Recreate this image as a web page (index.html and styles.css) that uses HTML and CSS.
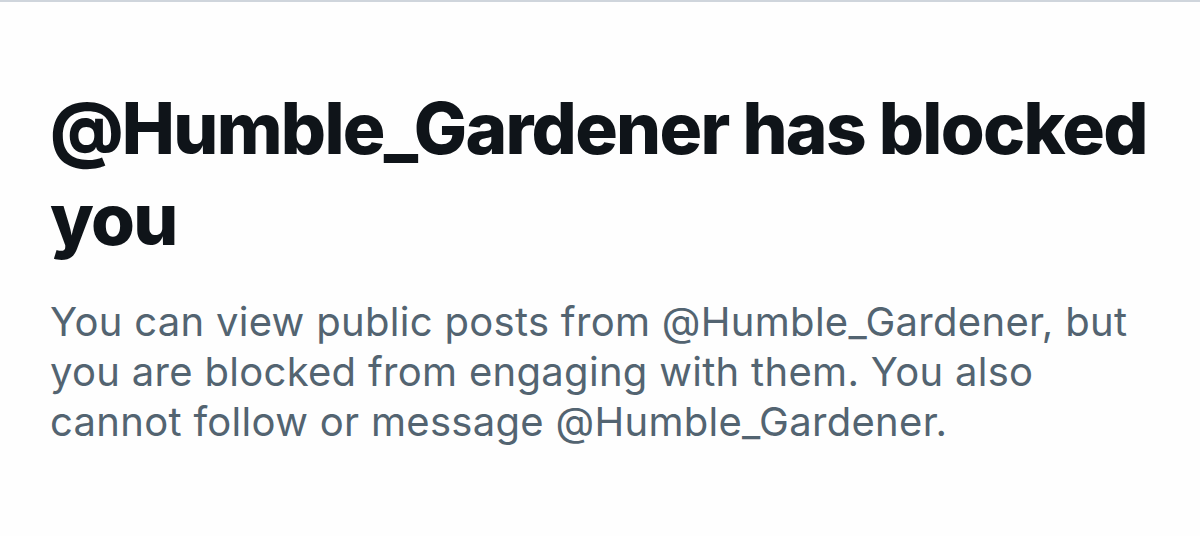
FILE: index.html
```html
<!DOCTYPE html>
<html>
<head>
<meta charset="utf-8">
<link rel="stylesheet" href="styles.css">
</head>
<body>
<div class="page">
  <div class="content">
    <h1 class="title">@Humble_Gardener has blocked you</h1>
    <p class="desc">You can view public posts from @Humble_Gardener, but you are blocked from engaging with them. You also cannot follow or message @Humble_Gardener.</p>
  </div>
</div>
</body>
</html>
```
FILE: styles.css
```css
html, body {
  margin: 0;
  padding: 0;
  background: #fefefe;
}
.page {
  width: 1200px;
  height: 536px;
  border-top: 2px solid #cfd5dc;
  box-sizing: border-box;
  overflow: hidden;
}
.content {
  padding: 81px 20px 0 50px;
  display: flex;
  flex-direction: column;
  gap: 32px;
}
.title {
  margin: 0;
  font-family: Inter, "Liberation Sans", sans-serif;
  font-weight: 800;
  font-size: 71px;
  line-height: 91px;
  color: #0f1419;
  letter-spacing: -1.7px;
}
.desc {
  margin: 0;
  font-family: Inter, "Liberation Sans", sans-serif;
  font-weight: 400;
  font-size: 40px;
  line-height: 50px;
  color: #536471;
  letter-spacing: 0.3px;
  max-width: 1100px;
}
```
